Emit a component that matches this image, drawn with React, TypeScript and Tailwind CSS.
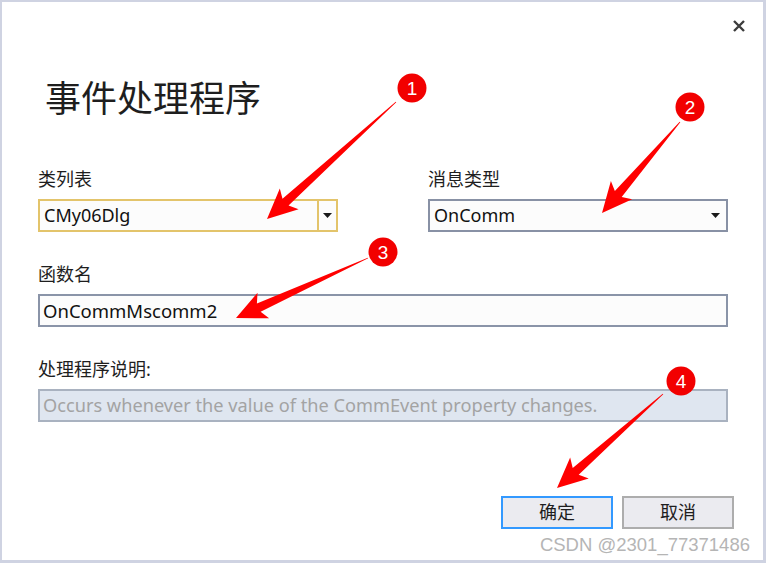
import React from 'react';

const cjk = { fontFamily: '"Noto Sans", "Noto Sans CJK SC", sans-serif' };

type Arrow = { x1: number; y1: number; x2: number; y2: number };

// red callouts drawn on top of the dialog
const arrows: Arrow[] = [
  { x1: 396, y1: 102, x2: 267, y2: 219 },
  { x1: 680, y1: 122, x2: 602, y2: 213 },
  { x1: 368, y1: 258, x2: 236, y2: 318 },
  { x1: 663, y1: 394, x2: 557, y2: 488 },
];

const badges = [
  { n: '1', x: 412, y: 88 },
  { n: '2', x: 690, y: 107 },
  { n: '3', x: 383, y: 252 },
  { n: '4', x: 681, y: 381 },
];

function arrowPoints({ x1, y1, x2, y2 }: Arrow) {
  const dx = x2 - x1;
  const dy = y2 - y1;
  const len = Math.hypot(dx, dy);
  const ux = dx / len;
  const uy = dy / len;
  const px = -uy;
  const py = ux;
  const headLen = 30;
  const headW = 14;
  const neckW = 4.5;
  const at = (t: number, w: number) => `${x1 + ux * t + px * w},${y1 + uy * t + py * w}`;
  const b = len - headLen;
  return [
    at(0, 0.4),
    at(b + 5, neckW),
    at(b, headW),
    at(len, 0),
    at(b, -headW),
    at(b + 5, -neckW),
    at(0, -0.4),
  ].join(' ');
}

function Caret() {
  return (
    <svg width="9" height="5" viewBox="0 0 9 5">
      <path d="M0 0h9L4.5 5z" fill="#1a1a1a" />
    </svg>
  );
}

export default function App() {
  return (
    <div
      className="relative w-[766px] h-[563px] bg-white border-[#cfd3e2] border-t-2 border-l-2 border-r-[3px] border-b-[3px] flex flex-col"
      style={cjk}
    >
      <div className="flex justify-end pt-[17px] pr-[17px]">
        <svg width="14" height="14" viewBox="0 0 14 14">
          <path d="M2 2L12 12M12 2L2 12" stroke="#3c3c3c" strokeWidth="2.4" />
        </svg>
      </div>

      <h1 className="ml-[43px] mt-[46px] text-[36px] leading-[40px] text-[#1e1e1e] font-normal">
        事件处理程序
      </h1>

      <div className="grid grid-cols-[300px_300px] gap-x-[90px] pl-[36px] mt-[48px]">
        <div className="flex flex-col">
          <label className="text-[18px] leading-[24px] text-[#1e1e1e]">类列表</label>
          <div className="mt-[8px] h-[33px] flex border-2 border-[#e3c46b] bg-[#fcfcfc]">
            <div className="flex-1 flex items-center pl-[4px] text-[18px] text-[#111]">CMy06Dlg</div>
            <div className="w-[19px] border-l-2 border-[#e3c46b] flex items-center justify-center">
              <Caret />
            </div>
          </div>
        </div>
        <div className="flex flex-col">
          <label className="text-[18px] leading-[24px] text-[#1e1e1e]">消息类型</label>
          <div className="mt-[8px] h-[33px] flex items-center border-2 border-[#8891a5] bg-[#fcfcfc] pl-[4px] pr-[6px]">
            <div className="flex-1 text-[18px] text-[#111]">OnComm</div>
            <Caret />
          </div>
        </div>
      </div>

      <div className="flex flex-col pl-[36px] w-[726px] mt-[30px]">
        <label className="text-[18px] leading-[24px] text-[#1e1e1e]">函数名</label>
        <div className="mt-[8px] h-[33px] flex items-center border-2 border-[#8a94a8] bg-[#fcfcfc] pl-[3px] text-[18.5px] text-[#111]">
          OnCommMscomm2
        </div>

        <label className="mt-[30px] text-[18px] leading-[24px] text-[#1e1e1e]">处理程序说明:</label>
        <div className="mt-[8px] h-[33px] flex items-center border-2 border-[#a9b2c0] bg-[#dfe6f0] pl-[3px] text-[18.2px] text-[#a3a3a3]">
          Occurs whenever the value of the CommEvent property changes.
        </div>
      </div>

      <div className="flex justify-end gap-[9px] pr-[29px] mt-[74px]">
        <button className="w-[112px] h-[33px] border-2 border-[#3399ff] bg-[#ebebf0] text-[18px] text-[#1e1e1e]">
          确定
        </button>
        <button className="w-[112px] h-[33px] border-2 border-[#adadad] bg-[#ebebf0] text-[18px] text-[#1e1e1e]">
          取消
        </button>
      </div>

      <div
        className="flex justify-end pr-[13px] mt-[5px] text-[18.5px] leading-[22px] text-[#b5b5b5]"
        style={{ fontFamily: '"Liberation Sans", Arial, sans-serif' }}
      >
        CSDN @2301_77371486
      </div>

      <svg className="absolute -left-[2px] -top-[2px] pointer-events-none" width="766" height="563">
        {arrows.map((a, i) => (
          <polygon key={i} points={arrowPoints(a)} fill="#ff0000" />
        ))}
        {badges.map((b) => (
          <g key={b.n}>
            <circle cx={b.x} cy={b.y} r="14.5" fill="#f20000" />
            <text
              x={b.x}
              y={b.y + 6.5}
              textAnchor="middle"
              fill="#fff"
              fontSize="19"
              fontFamily="Liberation Sans, Arial, sans-serif"
            >
              {b.n}
            </text>
          </g>
        ))}
      </svg>
    </div>
  );
}
